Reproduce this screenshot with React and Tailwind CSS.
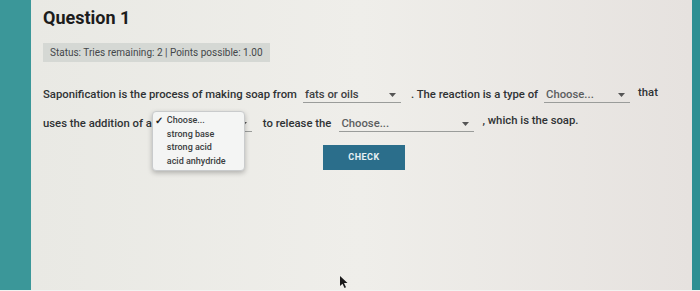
import React from "react";

function Select({ value, width, muted }) {
  return (
    <div
      className={`flex h-[16px] items-center justify-between border-b border-[#9a9c9a] pl-[2px] pr-[5px] ${width}`}
    >
      <span className={muted ? "text-[#5b5e60]" : "text-[#3d4042]"}>{value}</span>
      <svg width="7" height="4" viewBox="0 0 7 4">
        <path d="M0 0h7L3.5 4z" fill="#555" />
      </svg>
    </div>
  );
}

function Dropdown() {
  const options = ["Choose...", "strong base", "strong acid", "acid anhydride"];
  return (
    <div className="absolute left-[0px] top-[-5px] z-10 w-[93px] rounded-[4px] border border-[#c9cbcc] bg-[#f4f5f4] py-[2px] text-[9px] leading-[13.5px] text-[#3a3d40] shadow-[0_2px_5px_rgba(0,0,0,0.25)]">
      {options.map((opt, i) => (
        <div key={opt} className="flex items-center">
          <span className="w-[14px] pl-[2px] text-[10px] font-bold text-[#222]">{i === 0 ? "✓" : ""}</span>
          <span>{opt}</span>
        </div>
      ))}
    </div>
  );
}

export default function App() {
  return (
    <div className="flex h-[291px] w-[700px] flex-col bg-[#f3f3f1] font-['Roboto',sans-serif]">
      <div className="flex h-[290px]">
        <div className="w-[31px] bg-[#3b9799]" />
        <div className="relative flex-1 bg-gradient-to-r from-[#e9e9e4] via-[#efeeea] to-[#e6e2df] pl-[12px] pt-[6px]">
          <h1 className="text-[18px] font-bold leading-[24px] text-[#1c1c1c]">Question 1</h1>

          <div className="mt-[13px] inline-block bg-[#d5d8d4] px-[7px] py-[3px] text-[10px] leading-[13px] text-[#44474a]">
            Status: Tries remaining: 2 | Points possible: 1.00
          </div>

          <div className="mt-[24px] flex items-end text-[11.3px] font-medium leading-[16px] text-[#2f3234]">
            <span>Saponification is the process of making soap from</span>
            <div className="ml-[6px]">
              <Select value="fats or oils" width="w-[98px]" />
            </div>
            <span className="ml-[10px]">. The reaction is a type of</span>
            <div className="ml-[6px]">
              <Select value="Choose..." width="w-[86px]" muted />
            </div>
            <span className="ml-[8px] self-start mt-[-2px]">that</span>
          </div>

          <div className="mt-[10px] flex items-end text-[11.3px] font-medium leading-[16px] text-[#2f3234]">
            <span>uses the addition of a</span>
            <div className="relative ml-[0px]">
              <Select value="" width="w-[100px]" />
              <Dropdown />
            </div>
            <span className="ml-[11px]">to release the</span>
            <div className="ml-[8px]">
              <Select value="Choose..." width="w-[135px]" muted />
            </div>
            <span className="ml-[8px] mb-[3px]">, which is the soap.</span>
          </div>

          <button className="ml-[280px] mt-[13px] flex h-[25px] w-[82px] items-center justify-center bg-[#2b6e8b] text-[9px] font-bold tracking-[0.5px] text-[#e8f1f4]">
            CHECK
          </button>

          <svg
            className="absolute left-[309px] top-[276px]"
            width="8"
            height="12"
            viewBox="0 0 8 12"
          >
            <path d="M0 0v10l2.5-2.3L4.5 12l1.5-.7-2-4.3H7.5z" fill="#1a1a1a" />
          </svg>
        </div>
        <div className="w-[8px] bg-[#2f8f92]" />
      </div>
    </div>
  );
}
